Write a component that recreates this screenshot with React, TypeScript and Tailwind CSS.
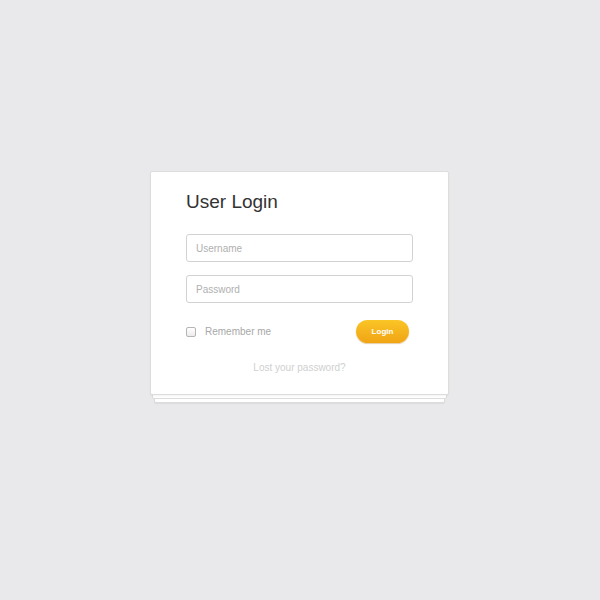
export default function App() {
  return (
    <div className="flex h-[600px] w-[600px] justify-center bg-[#e9e9eb] pt-[171px] font-['Liberation_Sans',Arial,sans-serif]">
      <div className="relative mr-[1px] h-[224px] w-[299px]">
        <div className="absolute left-[4px] right-[4px] top-[8px] h-[224px] rounded-[2px] border border-[#dcdcdc] bg-white shadow-[0_1px_1px_rgba(0,0,0,0.06)]" />
        <div className="absolute left-[2px] right-[2px] top-[4px] h-[224px] rounded-[2px] border border-[#dcdcdc] bg-white" />
        <div className="relative flex h-[224px] flex-col rounded-[2px] border border-[#dddddd] bg-white pl-[35px] pt-[18px] shadow-[0_1px_2px_rgba(0,0,0,0.05)]">
          <h1 className="text-[19px] leading-[24px] text-[#333]">User Login</h1>
          <input
            placeholder="Username"
            className="mt-[20px] h-[28px] w-[227px] rounded-[3px] border border-[#d2d2d2] px-[9px] text-[10px] text-[#555] placeholder:text-[#b0b0b0] outline-none"
          />
          <input
            placeholder="Password"
            type="password"
            className="mt-[13px] h-[28px] w-[227px] rounded-[3px] border border-[#d2d2d2] px-[9px] text-[10px] text-[#555] placeholder:text-[#b0b0b0] outline-none"
          />
          <div className="mt-[17px] flex h-[23px] w-[223px] items-center justify-between">
            <label className="flex items-center gap-[9px] text-[10px] text-[#a8a8a8]">
              <span className="h-[10px] w-[10px] rounded-[2px] border border-[#b5b5b5] bg-gradient-to-b from-white to-[#ececec]" />
              Remember me
            </label>
            <button className="h-[23px] w-[53px] rounded-full bg-gradient-to-b from-[#fac526] to-[#f0a414] text-[8px] font-bold text-white shadow-[0_1px_1px_rgba(180,110,0,0.35)]">
              Login
            </button>
          </div>
          <p className="mt-[17px] w-[227px] text-center text-[10px] text-[#cfcfcf]">Lost your password?</p>
        </div>
      </div>
    </div>
  );
}
